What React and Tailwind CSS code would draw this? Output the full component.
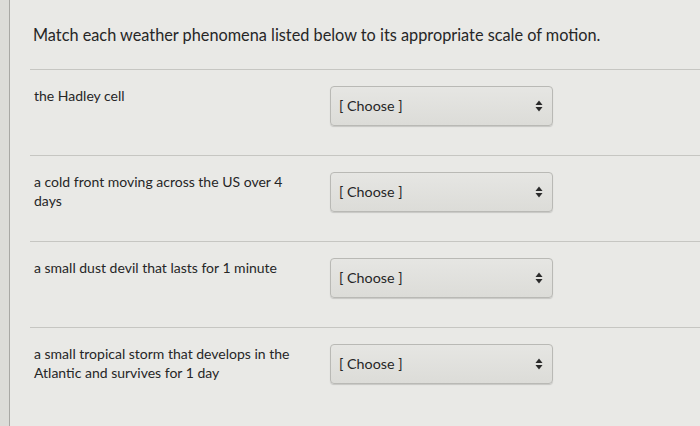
import React from "react";

const rows = [
  { label: "the Hadley cell" },
  { label: "a cold front moving across the US over 4 days" },
  { label: "a small dust devil that lasts for 1 minute" },
  { label: "a small tropical storm that develops in the Atlantic and survives for 1 day" },
];

function Arrows() {
  return (
    <svg width="8" height="12" viewBox="0 0 8 12" className="shrink-0">
      <path d="M4 0.5 L7.5 5 L0.5 5 Z" fill="#2a2a2a" />
      <path d="M4 11.5 L7.5 7 L0.5 7 Z" fill="#2a2a2a" />
    </svg>
  );
}

export default function App() {
  return (
    <div className="w-[700px] h-[426px] overflow-hidden flex bg-[#dcdcd8] font-['Lato','Liberation_Sans',sans-serif] text-[#262626]">
      <div className="w-[9px] shrink-0" />
      <div className="flex-1 border-l border-[#a8a8a4] bg-[#e9e9e6] pt-[24px]">
        <p className="pl-[23px] text-[16.3px] leading-[22px]">
          Match each weather phenomena listed below to its appropriate scale of motion.
        </p>
        <div className="mt-[23px] ml-[20px] border-t border-[#c6c6c2]">
          {rows.map((r, i) => (
            <div
              key={i}
              className={`flex items-start h-[86px] pt-[16px] ${i < 3 ? "border-b border-[#c6c6c2]" : ""}`}
            >
              <div className="w-[270px] shrink-0 pl-[4px] pr-[8px] text-[14px] leading-[19px]">
                {r.label}
              </div>
              <div className="ml-[30px] w-[223px] h-[40px] flex items-center justify-between pl-[8px] pr-[9px] rounded-[4px] border border-[#b9b9b5] bg-gradient-to-b from-[#e6e6e3] to-[#dcdcd8] shadow-[0_1px_1px_rgba(0,0,0,0.15)]">
                <span className="text-[14.3px] leading-[18px]">[ Choose ]</span>
                <Arrows />
              </div>
            </div>
          ))}
        </div>
      </div>
    </div>
  );
}
